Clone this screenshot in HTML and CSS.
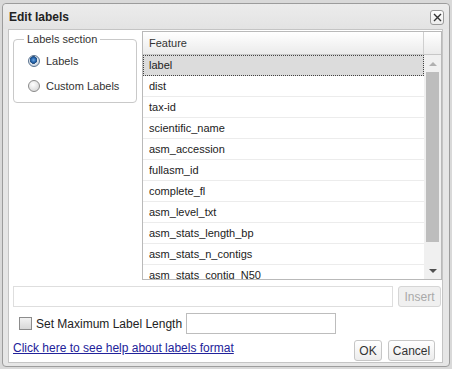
FILE: index.html
```html
<!DOCTYPE html>
<html lang="en">
  <head>
    <meta charset="UTF-8" />
    <title>Edit labels</title>
    <link rel="stylesheet" href="styles.css">
  </head>
  <body>
    <div class="dialog">
      <div class="titlebar">
        <span class="title">Edit labels</span>
        <button class="close" title="Close">
          <svg width="9" height="9" viewBox="0 0 9 9">
            <path d="M1 1 L8 8 M8 1 L1 8" stroke="#333" stroke-width="1.4" />
          </svg>
        </button>
      </div>

      <div class="panel">
        <div class="top">
          <div class="side">
            <fieldset class="section">
              <legend>Labels section</legend>
              <label class="radio-row">
                <span class="radio checked"></span> Labels
              </label>
              <label class="radio-row">
                <span class="radio"></span> Custom Labels
              </label>
            </fieldset>
          </div>

          <div class="grid">
            <div class="grid-head">
              <div class="col-feature">Feature</div>
              <div class="col-filler"></div>
            </div>
            <div class="grid-body">
              <div class="rows">
                <div class="row selected">label</div>
                <div class="row">dist</div>
                <div class="row">tax-id</div>
                <div class="row">scientific_name</div>
                <div class="row">asm_accession</div>
                <div class="row">fullasm_id</div>
                <div class="row">complete_fl</div>
                <div class="row">asm_level_txt</div>
                <div class="row">asm_stats_length_bp</div>
                <div class="row">asm_stats_n_contigs</div>
                <div class="row">asm_stats_contig_N50</div>
              </div>
              <div class="scrollbar">
                <div class="arrow up"></div>
                <div class="thumb"></div>
                <div class="track"></div>
                <div class="arrow down"></div>
              </div>
            </div>
          </div>
        </div>

        <div class="insert-row">
          <input type="text" class="insert-input" />
          <button class="btn disabled">Insert</button>
        </div>

        <div class="max-row">
          <span class="checkbox"></span>
          <span class="max-label">Set Maximum Label Length</span>
          <input type="text" class="max-input" />
        </div>

        <div class="footer-row">
          <a href="#" class="help">Click here to see help about labels format</a>
          <div class="buttons">
            <button class="btn btn-ok">OK</button>
            <button class="btn btn-cancel">Cancel</button>
          </div>
        </div>
      </div>
    </div>
  </body>
</html>
```

FILE: styles.css
```css
body {
  margin: 0;
  padding: 3px 2px 2px 2px;
  background: #d9d9d9;
  font-family: "Liberation Sans", Arial, sans-serif;
  font-size: 12px;
  color: #333;
}

.dialog {
  width: 446px;
  height: 362px;
  border: 1px solid #9c9c9c;
  border-radius: 4px;
  background: #e6e6e6;
  display: flex;
  flex-direction: column;
}

.titlebar {
  height: 25px;
  display: flex;
  align-items: center;
  justify-content: space-between;
  padding: 0 5px 0 6px;
  background: linear-gradient(#ececec, #e3e3e3);
  border-radius: 4px 4px 0 0;
}
.title {
  font-weight: bold;
  font-size: 12px;
  color: #222;
  margin-top: 1px;
}
.close {
  width: 14px;
  height: 15px;
  padding: 0;
  margin-top: 2px;
  border: 1px solid #9a9a9a;
  border-radius: 3px;
  background: linear-gradient(#ffffff, #ececec);
  display: flex;
  align-items: center;
  justify-content: center;
}

.panel {
  margin: 0 6px 3px 5px;
  border: 1px solid #c4c4c4;
  background: #fff;
  height: 332px;
  display: flex;
  flex-direction: column;
}

.top {
  display: flex;
  margin-top: 1px;
}
.side {
  width: 128px;
  flex-shrink: 0;
}
.section {
  margin: 1px 0 0 4px;
  width: 124px;
  box-sizing: border-box;
  border: 1px solid #c9c9c9;
  border-radius: 4px;
  padding: 2px 4px 4px 10px;
  font-size: 11px;
}
.section legend {
  padding: 0 3px;
  line-height: 14px;
  color: #333;
}
.radio-row {
  display: flex;
  align-items: center;
  height: 25px;
  padding-left: 4px;
  gap: 6px;
}
.radio {
  width: 10px;
  height: 10px;
  border: 1px solid #8a8a8a;
  border-radius: 50%;
  background: radial-gradient(circle at 40% 35%, #ffffff, #d0d0d0);
}
.radio.checked {
  border-color: #5a7390;
  background: radial-gradient(circle at 45% 40%, #6fa8e0 0, #1f5fa8 2.5px, #2a4f7a 3.6px, #dfe6ee 4px, #c8d2dc 6px);
}

.grid {
  width: 300px;
  height: 249px;
  flex-shrink: 0;
  margin-left: 5px;
  box-sizing: border-box;
  border: 1px solid #b9b9b9;
  display: flex;
  flex-direction: column;
  font-size: 11px;
}
.grid-head {
  display: flex;
  height: 23px;
  box-sizing: border-box;
  border-bottom: 1px solid #c7c7c7;
  background: linear-gradient(#ffffff, #ebebeb);
}
.col-feature {
  flex: 1;
  padding-left: 6px;
  line-height: 22px;
  border-right: 1px solid #cfcfcf;
}
.col-filler {
  width: 17px;
}
.grid-body {
  display: flex;
  height: 224px;
  overflow: hidden;
}
.rows {
  flex: 1;
}
.row {
  height: 21px;
  line-height: 20px;
  box-sizing: border-box;
  padding-left: 6px;
  border-bottom: 1px solid #ececec;
  color: #222;
}
.row.selected {
  background: #dcdcdc;
  border: 1px dotted #444;
  padding-left: 5px;
  line-height: 19px;
}

.scrollbar {
  width: 17px;
  background: #f0f0f0;
  display: flex;
  flex-direction: column;
  align-items: center;
}
.arrow {
  height: 17px;
  width: 17px;
  display: flex;
  align-items: center;
  justify-content: center;
}
.arrow.up::before {
  content: "";
  border-left: 4px solid transparent;
  border-right: 4px solid transparent;
  border-bottom: 4px solid #b0b0b0;
}
.arrow.down::before {
  content: "";
  border-left: 4px solid transparent;
  border-right: 4px solid transparent;
  border-top: 4px solid #505050;
}
.thumb {
  width: 13px;
  height: 170px;
  background: #bdbdbd;
}
.track {
  flex: 1;
}

.insert-row {
  display: flex;
  margin: 6px 1px 0 4px;
  gap: 5px;
  height: 21px;
}
.insert-input {
  width: 380px;
  box-sizing: border-box;
  border: 1px solid #dedede;
  margin: 0;
}
.btn {
  font-family: "Liberation Sans", Arial, sans-serif;
  font-size: 12px;
  color: #333;
  height: 21px;
  padding: 0;
  border: 1px solid #c6c6c6;
  border-radius: 3px;
  background: linear-gradient(#ffffff, #ececec);
}
.btn.disabled {
  width: 43px;
  color: #a9a9a9;
  border-color: #d6d6d6;
  background: #f0f0f0;
}
.btn-ok {
  width: 28px;
}
.btn-cancel {
  width: 47px;
}

.max-row {
  display: flex;
  align-items: center;
  margin: 6px 0 0 10px;
  height: 21px;
}
.checkbox {
  width: 11px;
  height: 11px;
  border: 1px solid #8c8c8c;
  background: linear-gradient(#f2f2f2, #d8d8d8);
}
.max-label {
  margin-left: 4px;
  color: #222;
}
.max-input {
  width: 150px;
  height: 21px;
  box-sizing: border-box;
  margin: 0 0 0 4px;
  border: 1px solid #bdbdbd;
}

.footer-row {
  display: flex;
  justify-content: space-between;
  margin: 6px 7px 0 4px;
  height: 21px;
}
.help {
  color: #22229a;
  font-size: 12px;
  margin-top: 1px;
}
.buttons {
  display: flex;
  gap: 6px;
}
```
